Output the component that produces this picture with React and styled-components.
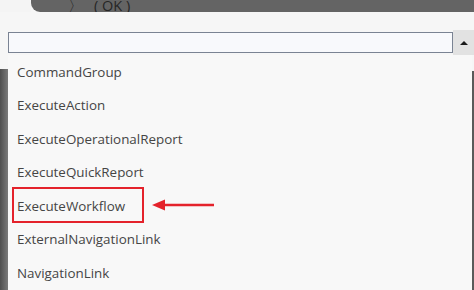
import styled, { createGlobalStyle } from 'styled-components'

const GlobalStyle = createGlobalStyle`
  html, body {
    margin: 0;
    padding: 0;
    background: #f6f6f6;
    font-family: "Open Sans", "Liberation Sans", sans-serif;
  }
`

const Page = styled.div`
  width: 474px;
  height: 290px;
  overflow: hidden;
  background: #f6f6f6;
  display: flex;
  flex-direction: column;
`

const TopBar = styled.div`
  height: 12px;
  display: flex;
`

const TopGap = styled.div`
  width: 31px;
  background: #f4f4f4;
`

const Tab = styled.div`
  flex: 1;
  background: #646464;
  border-bottom-left-radius: 9px;
  overflow: hidden;
  display: flex;
  align-items: flex-end;
  gap: 11px;
  padding-left: 37px;
  font-size: 14.5px;
  line-height: 20px;
  color: #262626;
`

const TabText = styled.span`
  margin-bottom: -4px;
  white-space: pre;
`

const ComboRow = styled.div`
  margin-top: 18px;
  display: flex;
  align-items: center;
  padding-left: 8px;
`

const Input = styled.div`
  flex: 1;
  height: 19px;
  border: 1px solid #7a8393;
  background: #f8f9fc;
`

const DropButton = styled.div`
  width: 21px;
  height: 25px;
  background: #e2e2e2;
  display: flex;
  align-items: center;
  justify-content: center;
`

const Caret = styled.div`
  width: 0;
  height: 0;
  border-left: 4px solid transparent;
  border-right: 4px solid transparent;
  border-bottom: 4px solid #1a1a1a;
`

const ListArea = styled.div`
  flex: 1;
  display: flex;
`

const Gutter = styled.div`
  width: ${p => p.$w}px;
  display: flex;
  flex-direction: column;
`

const GutterShade = styled.div`
  flex: 1;
  margin-top: ${p => p.$top}px;
  background: ${p => p.$bg};
`

const List = styled.div`
  flex: 1;
  background: #f8f8f8;
  display: flex;
  flex-direction: column;
`

const Item = styled.div`
  position: relative;
  height: 33.5px;
  display: flex;
  align-items: center;
  padding-left: 9px;
  font-size: 13.4px;
  color: #454545;
`

const Highlight = styled.div`
  position: absolute;
  left: 4px;
  top: -2px;
  width: 128px;
  height: 32px;
  border: 2px solid #e4222b;
`

const Arrow = styled.svg`
  position: absolute;
  left: 143px;
  top: 9px;
`

const items = [
  'CommandGroup',
  'ExecuteAction',
  'ExecuteOperationalReport',
  'ExecuteQuickReport',
  'ExecuteWorkflow',
  'ExternalNavigationLink',
  'NavigationLink'
]

export default function App() {
  return (
    <Page>
      <GlobalStyle />
      <TopBar>
        <TopGap />
        <Tab>
          <TabText>〉</TabText>
          <TabText>( OK )</TabText>
        </Tab>
      </TopBar>
      <ComboRow>
        <Input />
        <DropButton>
          <Caret />
        </DropButton>
      </ComboRow>
      <ListArea>
        <Gutter $w={8}>
          <GutterShade $top={14} $bg="linear-gradient(90deg, #4f4f4f, #7a7a7a)" />
        </Gutter>
        <List>
          {items.map(name => (
            <Item key={name}>
              {name}
              {name === 'ExecuteWorkflow' && (
                <>
                  <Highlight />
                  <Arrow width="66" height="14" viewBox="0 0 66 14">
                    <line x1="12" y1="7" x2="63" y2="7" stroke="#e4222b" strokeWidth="2.4" />
                    <polygon points="1,7 14,1.5 14,12.5" fill="#e4222b" />
                  </Arrow>
                </>
              )}
            </Item>
          ))}
        </List>
        <Gutter $w={2}>
          <GutterShade $top={16} $bg="#5a5a5a" />
        </Gutter>
      </ListArea>
    </Page>
  )
}
